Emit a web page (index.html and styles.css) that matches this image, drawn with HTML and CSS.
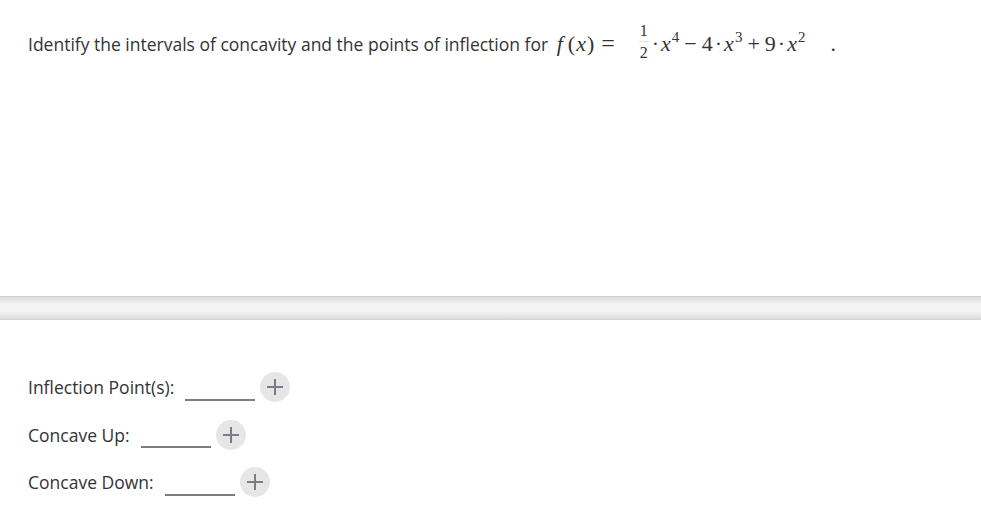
FILE: index.html
```html
<!DOCTYPE html>
<html lang="en">
<head>
    <meta charset="UTF-8">
    <meta name="viewport" content="width=device-width, initial-scale=1.0">
    <title>Concavity</title>
    <link rel="stylesheet" href="styles.css">
</head>
<body>
    <div class="question">
        <p class="prompt">
            Identify the intervals of concavity and the points of inflection for
            <span class="math"><span class="mi">f</span><span class="mo po">(</span><span class="mi">x</span><span class="mo pc">)</span><span class="rel">=</span><span class="frac"><span class="num">1</span><span class="bar"></span><span class="den">2</span></span><span class="cdot">&middot;</span><span class="mi">x</span><span class="sup">4</span><span class="bin">&minus;</span><span class="mn">4</span><span class="cdot">&middot;</span><span class="mi">x</span><span class="sup">3</span><span class="bin">+</span><span class="mn">9</span><span class="cdot">&middot;</span><span class="mi">x</span><span class="sup">2</span><span class="period">.</span></span>
        </p>
    </div>

    <div class="divider"></div>

    <div class="answers">
        <div class="row">
            <span class="label">Inflection Point(s):</span>
            <span class="blank"></span>
            <button class="add" type="button">
                <svg width="16" height="16" viewBox="0 0 16 16"><path d="M8 0v16M0 8h16" stroke="#7a7d89" stroke-width="2"/></svg>
            </button>
        </div>
        <div class="row">
            <span class="label">Concave Up:</span>
            <span class="blank"></span>
            <button class="add" type="button">
                <svg width="16" height="16" viewBox="0 0 16 16"><path d="M8 0v16M0 8h16" stroke="#7a7d89" stroke-width="2"/></svg>
            </button>
        </div>
        <div class="row">
            <span class="label">Concave Down:</span>
            <span class="blank"></span>
            <button class="add" type="button">
                <svg width="16" height="16" viewBox="0 0 16 16"><path d="M8 0v16M0 8h16" stroke="#7a7d89" stroke-width="2"/></svg>
            </button>
        </div>
    </div>
</body>
</html>
```

FILE: styles.css
```css
body {
  margin: 0;
  font-family: "Open Sans", "Liberation Sans", sans-serif;
  font-size: 17.5px;
  color: #333;
  background: #fff;
}

.question {
  height: 296px;
  box-sizing: border-box;
  padding: 25px 28px 0;
}

.prompt {
  margin: 0;
  line-height: 24px;
}

.math {
  font-family: "Liberation Serif", "DejaVu Serif", serif;
  font-size: 22px;
  color: #333;
  margin-left: 4px;
  line-height: 1;
  white-space: nowrap;
}

.mi {
  font-style: italic;
}

.mo {
  padding: 0 1px;
}

.po {
  padding-left: 5px;
}

.rel {
  font-size: 24px;
  padding: 0 11px 0 6px;
}

.bin {
  padding: 0 5px;
}

.cdot {
  padding: 0 2px;
}

.sup {
  font-size: 15px;
  vertical-align: 9px;
  padding-left: 1px;
}

.period {
  padding-left: 25px;
}

.frac {
  display: inline-flex;
  flex-direction: column;
  align-items: center;
  vertical-align: 15px;
  font-size: 16px;
  padding: 0 1px 0 13px;
}

.num,
.den {
  line-height: 12px;
}

.bar {
  width: 10px;
  height: 1px;
  margin: 4px 0 5px;
  background: #e4e4e4;
}

.divider {
  height: 24px;
  box-sizing: border-box;
  border-top: 1px solid #cfcfcf;
  border-bottom: 1px solid #d6d6d6;
  background: linear-gradient(#dcdcdc, #f3f3f3 35%, #f3f3f3 65%, #dcdcdc);
}

.answers {
  padding: 52px 28px 0;
  display: flex;
  flex-direction: column;
  gap: 17.5px;
}

.row {
  display: flex;
  align-items: center;
  height: 30px;
}

.label {
  margin-right: 11px;
}

.blank {
  width: 70px;
  height: 25px;
  border-bottom: 2px solid #7a7c86;
}

.add {
  width: 30px;
  height: 30px;
  margin-left: 5px;
  padding: 0;
  border: none;
  border-radius: 50%;
  background: #e6e6e6;
  display: flex;
  align-items: center;
  justify-content: center;
  cursor: pointer;
}
```
